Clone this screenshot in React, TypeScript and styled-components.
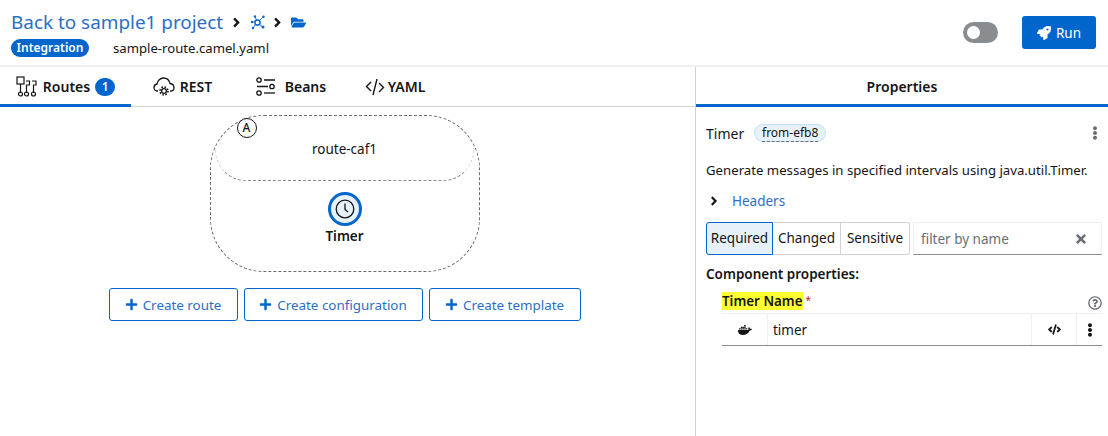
import * as React from 'react';
import styled, { createGlobalStyle } from 'styled-components';
import { FaAngleRight, FaCode, FaDocker, FaEllipsisV, FaFolderOpen, FaPlus, FaRegQuestionCircle, FaRocket, FaTimes } from 'react-icons/fa';

const BLUE = '#0066cc';
const FONT = '"Noto Sans", "Open Sans", sans-serif';

const GlobalStyle = createGlobalStyle`
  html, body { margin: 0; padding: 0; background: #fff; }
  body { font-family: ${FONT}; color: #151515; font-size: 14px; overflow: hidden; }
  * { box-sizing: border-box; }
`;

const Page = styled.div`
  width: 1108px;
  height: 436px;
  display: flex;
  flex-direction: column;
`;

const Header = styled.header`
  height: 67px;
  flex: none;
  border-bottom: 2px solid #f0f0f0;
  display: flex;
  align-items: flex-start;
  justify-content: space-between;
  padding: 9px 12px 0 11px;
`;

const TitleBlock = styled.div`
  display: flex;
  flex-direction: column;
  gap: 3px;
`;

const Crumbs = styled.div`
  display: flex;
  align-items: center;
  height: 27px;
  color: ${BLUE};
`;

const BackLink = styled.span`
  font-size: 18.9px;
  line-height: 27px;
  color: #2b6fc4;
  width: 216px;
  white-space: nowrap;
`;

const Sep = styled(FaAngleRight)`
  color: #151515;
  font-size: 15px;
  margin: 0 6px 0 2px;
`;

const Badge = styled.span`
  background: ${BLUE};
  color: #fff;
  font-size: 12px;
  font-weight: 600;
  line-height: 18px;
  height: 18px;
  width: 78px;
  border-radius: 9px;
  text-align: center;
`;

const FileRow = styled.div`
  display: flex;
  align-items: center;
  gap: 24px;
`;

const FileName = styled.span`
  font-size: 13.15px;
`;

const Actions = styled.div`
  display: flex;
  align-items: center;
  gap: 24px;
  margin-top: 7px;
`;

const Toggle = styled.span`
  position: relative;
  width: 35px;
  height: 21px;
  border-radius: 11px;
  background: #8a8d90;
  &::after {
    content: '';
    position: absolute;
    left: 4px;
    top: 4px;
    width: 13px;
    height: 13px;
    border-radius: 50%;
    background: #fff;
  }
`;

const RunButton = styled.button`
  width: 74px;
  height: 33px;
  border: 0;
  border-radius: 3px;
  background: ${BLUE};
  color: #fff;
  font: 13.5px ${FONT};
  display: flex;
  align-items: center;
  justify-content: center;
  gap: 5px;
  padding: 0;
`;

const Body = styled.div`
  flex: 1;
  display: flex;
  min-height: 0;
`;

const LeftPane = styled.section`
  width: 696px;
  flex: none;
  border-right: 1px solid #d2d2d2;
  display: flex;
  flex-direction: column;
`;

const TabBar = styled.nav`
  height: 40px;
  flex: none;
  display: flex;
  border-bottom: 1px solid #d2d2d2;
`;

const Tab = styled.div<{ $active?: boolean; $width: number; $gap: number }>`
  width: ${p => p.$width}px;
  height: 40px;
  display: flex;
  align-items: center;
  justify-content: center;
  gap: ${p => p.$gap}px;
  font-size: 14px;
  font-weight: 600;
  border-bottom: 3px solid ${p => (p.$active ? BLUE : 'transparent')};
  padding-top: 2px;
`;

const CountBadge = styled.span`
  width: 20px;
  height: 18px;
  border-radius: 9px;
  background: ${BLUE};
  color: #fff;
  font-size: 12px;
  font-weight: 600;
  line-height: 18px;
  text-align: center;
`;

const Canvas = styled.div`
  flex: 1;
  display: flex;
  flex-direction: column;
  align-items: center;
  padding: 8px 6px 0 0;
`;

const RouteBox = styled.div`
  position: relative;
  width: 270px;
  height: 157px;
  border: 1px dashed #6a6e73;
  border-radius: 54px;
  margin-bottom: 16px;
  display: flex;
  flex-direction: column;
  align-items: center;
`;

const RouteHeader = styled.div`
  width: 259px;
  height: 65px;
  flex: none;
  text-align: center;
  font-size: 13.5px;
  line-height: 66px;
  position: relative;
  &::before {
    content: '';
    position: absolute;
    left: 0;
    right: 0;
    bottom: 0;
    height: 32px;
    border: 1px dashed #d2d2d2;
    border-top: 0;
    border-bottom-color: #8a8d90;
    border-radius: 0 0 31px 31px;
  }
`;

const AutoMark = styled.span`
  position: absolute;
  left: 26px;
  top: 2px;
  width: 20px;
  height: 20px;
  border: 1px solid #151515;
  border-radius: 50%;
  background: #fff;
  font-size: 12px;
  font-weight: 500;
  line-height: 18px;
  text-align: center;
`;

const StepCircle = styled.div`
  width: 34px;
  height: 34px;
  margin-top: 11px;
  border: 3px solid ${BLUE};
  border-radius: 50%;
  background: #e7f1fa;
  display: flex;
  align-items: center;
  justify-content: center;
`;

const StepLabel = styled.div`
  font-size: 13.5px;
  font-weight: 600;
  line-height: 20px;
`;

const CreateRow = styled.div`
  display: flex;
  gap: 6px;
`;

const CreateButton = styled.button<{ $width: number }>`
  width: ${p => p.$width}px;
  height: 33px;
  padding: 0;
  background: #fff;
  border: 1px solid ${BLUE};
  border-radius: 3px;
  color: #2b6fc4;
  font: 13.4px ${FONT};
  display: flex;
  align-items: center;
  justify-content: center;
  gap: 5px;
  svg { font-size: 13px; color: ${BLUE}; }
`;

const RightPane = styled.aside`
  flex: 1;
  display: flex;
  flex-direction: column;
  min-width: 0;
`;

const PaneTitle = styled.div`
  height: 40px;
  flex: none;
  border-bottom: 3px solid ${BLUE};
  display: flex;
  align-items: center;
  justify-content: center;
  font-size: 14px;
  font-weight: 600;
  padding-top: 2px;
`;

const PaneBody = styled.div`
  padding: 16px 6px 0 10px;
  display: flex;
  flex-direction: column;
`;

const NameRow = styled.div`
  display: flex;
  align-items: center;
  height: 20px;
  font-size: 14px;
  gap: 10px;
`;

const IdPill = styled.span`
  height: 18px;
  width: 72px;
  border: 1px solid #bee1f4;
  border-radius: 9px;
  background: #e7f1fa;
  font-size: 12px;
  line-height: 15px;
  text-align: center;
  span { border-bottom: 1px dashed #6a6e73; }
`;

const Kebab = styled(FaEllipsisV)<{ $color: string }>`
  color: ${p => p.$color};
  font-size: 14px;
`;

const KebabSlot = styled.span`
  margin-left: auto;
  display: flex;
`;

const Description = styled.div`
  font-size: 13.2px;
  line-height: 20px;
  margin-top: 17px;
  white-space: nowrap;
`;

const HeadersRow = styled.div`
  display: flex;
  align-items: center;
  height: 20px;
  margin-top: 11px;
  color: #2b6fc4;
  font-size: 13.5px;
  gap: 11px;
  padding-left: 1px;
  svg { color: #151515; font-size: 14px; }
`;

const FilterRow = styled.div`
  display: flex;
  gap: 3px;
  margin-top: 11px;
`;

const ToggleGroup = styled.div`
  display: flex;
  width: 204px;
  height: 33px;
`;

const Segment = styled.div<{ $selected?: boolean; $width: number }>`
  width: ${p => p.$width}px;
  border: 1px solid ${p => (p.$selected ? BLUE : '#d2d2d2')};
  border-left-width: ${p => (p.$selected ? 1 : 0)}px;
  background: ${p => (p.$selected ? '#e7f1fa' : '#fff')};
  border-radius: ${p => (p.$selected ? '3px 0 0 3px' : '0')};
  font-size: 13.5px;
  line-height: 31px;
  text-align: center;
  white-space: nowrap;
  &:last-child { border-radius: 0 3px 3px 0; }
`;

const FilterBox = styled.div`
  width: 189px;
  height: 33px;
  border: 1px solid #f0f0f0;
  border-bottom: 1px solid #8a8d90;
  display: flex;
  align-items: center;
  justify-content: space-between;
  padding: 0 13px 0 7px;
  color: #6a6e73;
  font-size: 13.5px;
  svg { color: #6a6e73; font-size: 14px; }
`;

const SectionTitle = styled.div`
  font-size: 13.5px;
  font-weight: 600;
  line-height: 20px;
  margin-top: 9px;
`;

const Field = styled.div`
  margin: 8px 0 0 16px;
`;

const FieldLabel = styled.div`
  display: flex;
  align-items: flex-start;
  height: 21px;
  font-size: 13.4px;
  font-weight: 600;
  gap: 3px;
`;

const Highlight = styled.span`
  background: #ffff33;
  line-height: 18px;
  height: 18px;
`;

const Required = styled.span`
  color: #c9190b;
  font-size: 10px;
  line-height: 16px;
  font-weight: 400;
`;

const HelpIcon = styled(FaRegQuestionCircle)`
  margin: 4px 0 0 auto;
  color: #6a6e73;
  font-size: 14px;
`;

const InputRow = styled.div`
  height: 33px;
  display: grid;
  grid-template-columns: 45px 1fr 45px 26px;
  border-top: 1px solid #f0f0f0;
  border-bottom: 1px solid #8a8d90;
`;

const InputCell = styled.div<{ $text?: boolean }>`
  display: flex;
  align-items: center;
  justify-content: ${p => (p.$text ? 'flex-start' : 'center')};
  padding-left: ${p => (p.$text ? '5px' : '0')};
  font-size: 13.5px;
  & + & { border-left: 1px solid #f0f0f0; }
`;

const RoutesIcon = () => (
  <svg width="22" height="21" viewBox="0 0 22 21" fill="none" stroke="#151515" strokeWidth="1.2">
    <rect x="1" y="1" width="7" height="7" />
    <path d="M4.500 8v9" />
    <path d="M10 5h3.500v4H10.500v8" />
    <path d="M16 5h4v4H17.500v8" />
    <circle cx="4.500" cy="18" r="2" />
    <circle cx="10.500" cy="18" r="2" />
    <circle cx="17.500" cy="18" r="2" />
  </svg>
);

const RestIcon = () => (
  <svg width="22" height="20" viewBox="0 0 22 20" fill="none" stroke="#151515" strokeWidth="1.3">
    <path d="M5 14H4.500C2.500 14 1 12.500 1 10.500C1 8.700 2.300 7.300 4 7C4.500 3.700 7.200 1 10.500 1C13.700 1 16.300 3.300 17 6.500C19.300 6.800 21 8.500 21 10.700C21 12.700 19.500 14 17.500 14H17" />
    <circle cx="11" cy="14" r="2.400" />
    <circle cx="11" cy="14" r="4" strokeWidth="1.600" strokeDasharray="1.600 1.540" />
  </svg>
);

const BeansIcon = () => (
  <svg width="20" height="19" viewBox="0 0 20 19" fill="none" stroke="#151515" strokeWidth="1.3">
    <circle cx="3" cy="3" r="2.200" />
    <path d="M8 3h11M1 9.500h11" />
    <circle cx="16" cy="9.500" r="2.200" />
    <circle cx="3" cy="16" r="2.200" />
    <path d="M8 16h11" />
  </svg>
);

const YamlIcon = () => (
  <svg width="20" height="20" viewBox="0 0 20 20" fill="none" stroke="#151515" strokeWidth="1.4">
    <path d="M6 5L1.500 9.500L6 14M12 2L8 18M14 6L18.500 10.500L14 15" />
  </svg>
);

const TopologyIcon = () => (
  <svg width="15" height="15" viewBox="0 0 15 15" fill={BLUE}>
    <circle cx="7.500" cy="7.500" r="2.600" fill="none" stroke={BLUE} strokeWidth="1.500" />
    <circle cx="2" cy="7" r="1.200" />
    <circle cx="5" cy="1.500" r="1.200" />
    <circle cx="13.500" cy="1.800" r="1.200" />
    <circle cx="3" cy="13" r="1.200" />
    <circle cx="13" cy="12" r="1.500" />
    <path d="M2 7H5M5 1.500L6.500 5M13.500 1.800L9.500 5.500M3 13L5.500 9.500M13 12L9.500 9.500" stroke={BLUE} strokeWidth="0.900" />
  </svg>
);

const ClockIcon = () => (
  <svg width="20" height="20" viewBox="0 0 20 20" fill="none" stroke="#151515" strokeWidth="1.300">
    <circle cx="10" cy="10" r="8.800" />
    <path d="M10 4.500V10.500L13 13" />
  </svg>
);

export default function App() {
  return (
    <Page>
      <GlobalStyle />
      <Header>
        <TitleBlock>
          <Crumbs>
            <BackLink>Back to sample1 project</BackLink>
            <Sep />
            <TopologyIcon />
            <Sep style={{ marginLeft: 5 }} />
            <FaFolderOpen size={15} />
          </Crumbs>
          <FileRow>
            <Badge>Integration</Badge>
            <FileName>sample-route.camel.yaml</FileName>
          </FileRow>
        </TitleBlock>
        <Actions>
          <Toggle />
          <RunButton>
            <FaRocket size={14} />
            Run
          </RunButton>
        </Actions>
      </Header>
      <Body>
        <LeftPane>
          <TabBar>
            <Tab $active $width={131} $gap={5}>
              <RoutesIcon />
              Routes
              <CountBadge>1</CountBadge>
            </Tab>
            <Tab $width={103} $gap={5}>
              <RestIcon />
              REST
            </Tab>
            <Tab $width={114} $gap={9}>
              <BeansIcon />
              Beans
            </Tab>
            <Tab $width={94} $gap={3}>
              <YamlIcon />
              YAML
            </Tab>
          </TabBar>
          <Canvas>
            <RouteBox>
              <RouteHeader>route-caf1</RouteHeader>
              <AutoMark>A</AutoMark>
              <StepCircle>
                <ClockIcon />
              </StepCircle>
              <StepLabel>Timer</StepLabel>
            </RouteBox>
            <CreateRow>
              <CreateButton $width={129}>
                <FaPlus />
                Create route
              </CreateButton>
              <CreateButton $width={179}>
                <FaPlus />
                Create configuration
              </CreateButton>
              <CreateButton $width={152}>
                <FaPlus />
                Create template
              </CreateButton>
            </CreateRow>
          </Canvas>
        </LeftPane>
        <RightPane>
          <PaneTitle>Properties</PaneTitle>
          <PaneBody>
            <NameRow>
              Timer
              <IdPill>
                <span>from-efb8</span>
              </IdPill>
              <KebabSlot>
                <Kebab $color="#6a6e73" />
              </KebabSlot>
            </NameRow>
            <Description>Generate messages in specified intervals using java.util.Timer.</Description>
            <HeadersRow>
              <FaAngleRight />
              Headers
            </HeadersRow>
            <FilterRow>
              <ToggleGroup>
                <Segment $selected $width={67}>Required</Segment>
                <Segment $width={68}>Changed</Segment>
                <Segment $width={69}>Sensitive</Segment>
              </ToggleGroup>
              <FilterBox>
                filter by name
                <FaTimes />
              </FilterBox>
            </FilterRow>
            <SectionTitle>Component properties:</SectionTitle>
            <Field>
              <FieldLabel>
                <Highlight>Timer Name</Highlight>
                <Required>*</Required>
                <HelpIcon />
              </FieldLabel>
              <InputRow>
                <InputCell>
                  <FaDocker size={14} />
                </InputCell>
                <InputCell $text>timer</InputCell>
                <InputCell>
                  <FaCode size={13} />
                </InputCell>
                <InputCell>
                  <Kebab $color="#151515" />
                </InputCell>
              </InputRow>
            </Field>
          </PaneBody>
        </RightPane>
      </Body>
    </Page>
  );
}
